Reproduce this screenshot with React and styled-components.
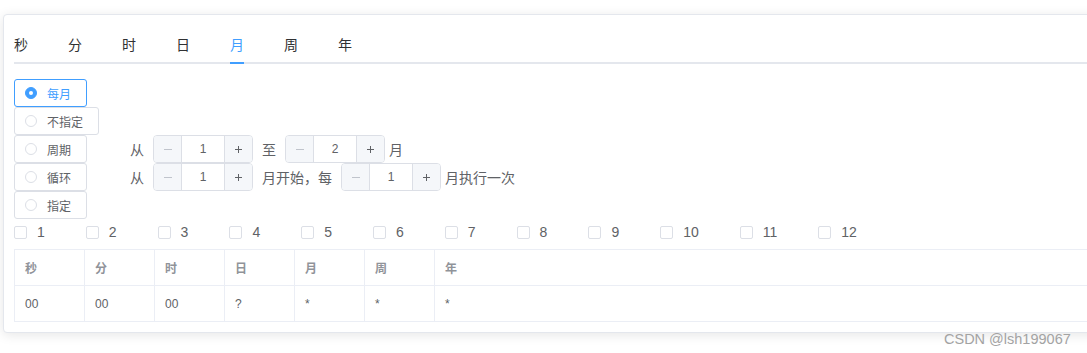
import React from 'react'
import styled, { createGlobalStyle } from 'styled-components'

const GlobalStyle = createGlobalStyle`
  html, body {
    margin: 0;
    padding: 0;
    background: #fff;
    overflow: hidden;
  }
  body {
    font-family: "Liberation Sans", Arial, "Noto Sans CJK SC", sans-serif;
  }
`

const Page = styled.div`
  position: relative;
  width: 1087px;
  height: 353px;
  overflow: hidden;
  padding-top: 14px;
  box-sizing: border-box;
`

const Card = styled.div`
  margin-left: 3px;
  width: 1120px;
  box-sizing: border-box;
  border: 1px solid #e4e7ed;
  border-radius: 4px;
  background: #fff;
  box-shadow: 0 2px 12px 0 rgba(0, 0, 0, 0.1);
  padding: 10px 10px 10px;
`

const TabNav = styled.div`
  display: flex;
  height: 39px;
  box-shadow: inset 0 -2px 0 #e4e7ed;
  margin-bottom: 15px;
`

const Tab = styled.div`
  padding: ${p => (p.$first ? '0 20px 0 0' : '0 20px')};
  font-size: 14px;
  color: ${p => (p.$active ? '#409eff' : '#303133')};
`

const TabLabel = styled.span`
  display: block;
  height: 39px;
  line-height: 40px;
  box-shadow: ${p => (p.$active ? 'inset 0 -2px 0 #409eff' : 'none')};
`

const Pane = styled.div`
  display: flex;
  flex-direction: column;
`

const RadioRow = styled.div`
  display: flex;
  align-items: center;
  height: 28px;
`

const RadioBox = styled.label`
  display: inline-flex;
  align-items: center;
  box-sizing: border-box;
  height: 28px;
  padding: 0 15px 0 10px;
  border: 1px solid ${p => (p.$checked ? '#409eff' : '#dcdfe6')};
  border-radius: 3px;
  font-size: 12px;
  color: ${p => (p.$checked ? '#409eff' : '#606266')};
`

const RadioDot = styled.span`
  display: flex;
  align-items: center;
  justify-content: center;
  width: 12px;
  height: 12px;
  box-sizing: border-box;
  border-radius: 50%;
  margin-right: 10px;
  border: 1px solid ${p => (p.$checked ? '#409eff' : '#dcdfe6')};
  background: ${p => (p.$checked ? '#409eff' : '#fff')};

  &::after {
    content: '';
    width: 4px;
    height: 4px;
    border-radius: 50%;
    background: #fff;
  }
`

const Extra = styled.div`
  display: flex;
  align-items: center;
  margin-left: 43px;
  font-size: 14px;
  color: #606266;
`

const Word = styled.span`
  margin-left: ${p => p.$before || 0}px;
  white-space: nowrap;
`

const Stepper = styled.div`
  display: flex;
  box-sizing: border-box;
  width: 100px;
  height: 28px;
  margin: 0 4px 0 9px;
  border: 1px solid #dcdfe6;
  border-radius: 4px;
  overflow: hidden;
  background: #fff;
`

const StepButton = styled.span`
  display: flex;
  align-items: center;
  justify-content: center;
  width: 27px;
  background: #f5f7fa;
  color: ${p => (p.$muted ? '#c0c4cc' : '#606266')};
  border-${p => (p.$side === 'left' ? 'right' : 'left')}: 1px solid #dcdfe6;
`

const StepValue = styled.span`
  flex: 1;
  display: flex;
  align-items: center;
  justify-content: center;
  font-size: 12px;
  color: #606266;
`

const CheckRow = styled.div`
  display: flex;
  align-items: center;
  height: 14px;
  margin-top: 6px;
`

const CheckItem = styled.label`
  display: inline-flex;
  align-items: center;
  margin-right: 41px;
  font-size: 14px;
  color: #606266;
`

const CheckBox = styled.span`
  width: 13px;
  height: 13px;
  box-sizing: border-box;
  border: 1px solid #dcdfe6;
  border-radius: 2px;
  background: #fff;
  margin-right: 10px;
`

const Grid = styled.div`
  display: grid;
  grid-template-columns: repeat(6, 70px) 1fr;
  margin-top: 10px;
  border-top: 1px solid #ebeef5;
  border-left: 1px solid #ebeef5;
`

const Cell = styled.div`
  box-sizing: border-box;
  height: 36px;
  display: flex;
  align-items: center;
  padding: 0 10px;
  border-right: 1px solid #ebeef5;
  border-bottom: 1px solid #ebeef5;
  font-size: 12px;
  font-weight: ${p => (p.$head ? 'bold' : 'normal')};
  color: ${p => (p.$head ? '#909399' : '#606266')};
`

const Watermark = styled.div`
  position: absolute;
  top: 331px;
  left: 944px;
  font-family: "Liberation Sans", Arial, sans-serif;
  font-size: 14.5px;
  color: #a3a3a3;
  white-space: nowrap;
`

const MinusIcon = () => (
  <svg width="8" height="8" viewBox="0 0 8 8">
    <path d="M0 4.5h8" stroke="currentColor" strokeWidth="1" />
  </svg>
)

const PlusIcon = () => (
  <svg width="9" height="9" viewBox="0 0 9 9">
    <path d="M1 4.5h7M4.5 1v7" stroke="currentColor" strokeWidth="1" />
  </svg>
)

const Radio = ({ checked, children }) => (
  <RadioBox $checked={checked}>
    <RadioDot $checked={checked} />
    {children}
  </RadioBox>
)

const NumberInput = ({ value }) => (
  <Stepper>
    <StepButton $side="left" $muted>
      <MinusIcon />
    </StepButton>
    <StepValue>{value}</StepValue>
    <StepButton $side="right">
      <PlusIcon />
    </StepButton>
  </Stepper>
)

const tabs = ['秒', '分', '时', '日', '月', '周', '年']
const months = [1, 2, 3, 4, 5, 6, 7, 8, 9, 10, 11, 12]
const values = ['00', '00', '00', '?', '*', '*', '*']

const App = () => {
  return (
    <Page>
      <GlobalStyle />
      <Card>
        <TabNav>
          {tabs.map((t, i) => (
            <Tab key={t} $first={i === 0} $active={t === '月'}>
              <TabLabel $active={t === '月'}>{t}</TabLabel>
            </Tab>
          ))}
        </TabNav>
        <Pane>
          <RadioRow>
            <Radio checked>每月</Radio>
          </RadioRow>
          <RadioRow>
            <Radio>不指定</Radio>
          </RadioRow>
          <RadioRow>
            <Radio>周期</Radio>
            <Extra>
              <Word>从</Word>
              <NumberInput value={1} />
              <Word $before={5}>至</Word>
              <NumberInput value={2} />
              <Word>月</Word>
            </Extra>
          </RadioRow>
          <RadioRow>
            <Radio>循环</Radio>
            <Extra>
              <Word>从</Word>
              <NumberInput value={1} />
              <Word $before={5}>月开始，每</Word>
              <NumberInput value={1} />
              <Word>月执行一次</Word>
            </Extra>
          </RadioRow>
          <RadioRow>
            <Radio>指定</Radio>
          </RadioRow>
          <CheckRow>
            {months.map(m => (
              <CheckItem key={m}>
                <CheckBox />
                {m}
              </CheckItem>
            ))}
          </CheckRow>
          <Grid>
            {tabs.map(t => (
              <Cell key={'h' + t} $head>
                {t}
              </Cell>
            ))}
            {values.map((v, i) => (
              <Cell key={'v' + i}>{v}</Cell>
            ))}
          </Grid>
        </Pane>
      </Card>
      <Watermark>CSDN @lsh199067</Watermark>
    </Page>
  )
}

export default App
